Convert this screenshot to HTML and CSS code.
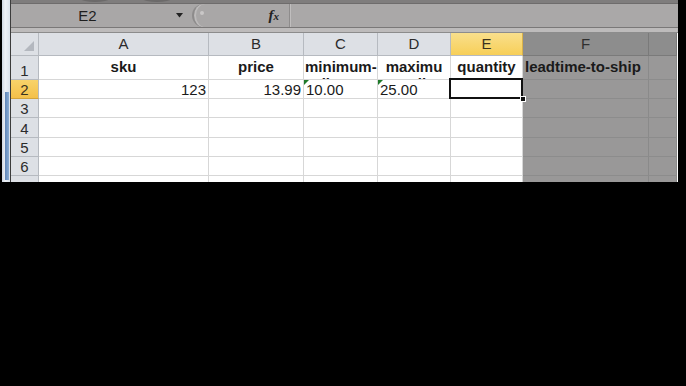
FILE: index.html
```html
<!DOCTYPE html>
<html>
<head>
<meta charset="utf-8">
<link rel="stylesheet" href="styles.css">
</head>
<body>
<div class="screen">
  <div class="edge"></div>
  <div class="winstrip"><div class="winstrip-blue"></div></div>
  <div class="app">
    <div class="ribbon-bottom">
      <span class="rb-bump rb-bump1"></span>
      <span class="rb-bump rb-bump2"></span>
    </div>
    <div class="formula-bar">
      <div class="name-box">
        <span class="name-text">E2</span>
        <svg class="dd" width="7" height="5" viewBox="0 0 7 5"><path d="M0 0H7L3.5 4.5Z" fill="#222"/></svg>
      </div>
      <div class="grip"><span class="grip-dot"></span></div>
      <div class="fx-area"><span class="fx">f<span class="fx-x">x</span></span></div>
      <div class="formula-input"></div>
    </div>
    <div class="sep"></div>
    <div class="grid">
      <div class="hdr corner"><svg width="10" height="10" viewBox="0 0 10 10"><path d="M10 0V10H0Z" fill="#b4b8bf"/></svg></div>
      <div class="hdr col">A</div>
      <div class="hdr col">B</div>
      <div class="hdr col">C</div>
      <div class="hdr col">D</div>
      <div class="hdr col col-active">E</div>
      <div class="hdr col shade-hdr">F</div>
      <div class="hdr col shade-hdr"></div>

      <div class="hdr rowh">1</div>
      <div class="cell bold center">sku</div>
      <div class="cell bold center">price</div>
      <div class="cell bold wrap">minimum-seller-allowed-price</div>
      <div class="cell bold wrap breakall">maximum-seller-allowed-price</div>
      <div class="cell bold center">quantity</div>
      <div class="cell bold shade">leadtime-to-ship</div>
      <div class="cell shade"></div>

      <div class="hdr rowh row-active">2</div>
      <div class="cell right">123</div>
      <div class="cell right">13.99</div>
      <div class="cell flag">10.00</div>
      <div class="cell flag">25.00</div>
      <div class="cell selected"><span class="sel-box"></span><span class="fill-handle"></span></div>
      <div class="cell shade"></div>
      <div class="cell shade"></div>

      <div class="hdr rowh">3</div>
      <div class="cell"></div><div class="cell"></div><div class="cell"></div><div class="cell"></div><div class="cell"></div><div class="cell shade"></div><div class="cell shade"></div>

      <div class="hdr rowh">4</div>
      <div class="cell"></div><div class="cell"></div><div class="cell"></div><div class="cell"></div><div class="cell"></div><div class="cell shade"></div><div class="cell shade"></div>

      <div class="hdr rowh">5</div>
      <div class="cell"></div><div class="cell"></div><div class="cell"></div><div class="cell"></div><div class="cell"></div><div class="cell shade"></div><div class="cell shade"></div>

      <div class="hdr rowh">6</div>
      <div class="cell"></div><div class="cell"></div><div class="cell"></div><div class="cell"></div><div class="cell"></div><div class="cell shade"></div><div class="cell shade"></div>

      <div class="hdr rowh"></div>
      <div class="cell"></div><div class="cell"></div><div class="cell"></div><div class="cell"></div><div class="cell"></div><div class="cell shade"></div><div class="cell shade"></div>
    </div>
  </div>
</div>
</body>
</html>
```

FILE: styles.css
```css
html, body {
  margin: 0;
  padding: 0;
  background: #000;
}
body {
  width: 686px;
  height: 386px;
  overflow: hidden;
  font-family: "Liberation Sans", Arial, sans-serif;
}
.screen {
  display: flex;
  height: 182px;
}
.edge {
  width: 2px;
  background: #000;
}
.winstrip {
  width: 8px;
  background: linear-gradient(to right, #cfd8e3, #eef2f7 40%, #dbe3ec);
  display: flex;
  flex-direction: column;
  justify-content: flex-end;
  padding-bottom: 2px;
  box-sizing: border-box;
}
.winstrip-blue {
  height: 88px;
  margin: 0 1px 0 3px;
  background: linear-gradient(to right, #5f86b8, #8aaed6);
}
.app {
  width: 668px;
  border-left: 1px solid #3c3c3c;
  box-sizing: border-box;
  display: flex;
  flex-direction: column;
  overflow: hidden;
  background: #a8a6a6;
}
.ribbon-bottom {
  height: 4px;
  background: #7f7d7d;
  position: relative;
  border-bottom: 1px solid #6e6c6c;
  box-sizing: border-box;
}
.rb-bump {
  position: absolute;
  top: -4px;
  width: 28px;
  height: 6px;
  border-radius: 50%;
  background: #6c6a6a;
}
.rb-bump1 { left: 70px; }
.rb-bump2 { left: 132px; }
.formula-bar {
  height: 23px;
  display: flex;
  align-items: stretch;
  background: #a9a7a7;
}
.name-box {
  width: 178px;
  display: flex;
  align-items: center;
  position: relative;
}
.name-text {
  flex: 1;
  text-align: center;
  font-size: 15px;
  color: #1e1e1e;
  padding-right: 12px;
}
.dd {
  margin-right: 6px;
}
.grip {
  width: 20px;
  margin: 0 0 0 3px;
  border-left: 2px solid #8d8b8b;
  border-radius: 12px 0 0 12px;
  position: relative;
  box-shadow: inset 2px 0 0 #bdbbbb;
}
.grip-dot {
  position: absolute;
  left: 6px;
  top: 7px;
  width: 4px;
  height: 4px;
  border-radius: 50%;
  background: #c9c7c7;
}
.fx-area {
  width: 76px;
  display: flex;
  align-items: center;
  justify-content: flex-end;
  border-right: 1px solid #8e8c8c;
  box-shadow: 1px 0 0 #c0bebe;
  padding-right: 10px;
  box-sizing: border-box;
}
.fx {
  font-family: "Liberation Serif", "Times New Roman", serif;
  font-style: italic;
  font-weight: bold;
  font-size: 15px;
  color: #222;
}
.fx-x {
  font-size: 11px;
}
.formula-input {
  flex: 1;
  background: #aaa8a8;
  margin-left: 2px;
}
.sep {
  height: 6px;
  box-sizing: border-box;
  border-top: 1px solid #7a7878;
  border-bottom: 1px solid #8c8c8c;
  background: #bdbbbb;
}
.grid {
  display: grid;
  grid-template-columns: 28px 170px 95px 74px 73px 72px 126px 28px;
  grid-template-rows: 23px 24px 19px 19px 20px 19px 19px 20px;
  background: #fff;
  flex: 1;
  overflow: hidden;
}
.hdr {
  background: #dde0e5;
  border-right: 1px solid #b6bac0;
  border-bottom: 1px solid #b6bac0;
  box-sizing: border-box;
  color: #2b2b2b;
  font-size: 15px;
  display: flex;
  align-items: center;
  justify-content: center;
}
.corner {
  align-items: flex-end;
  justify-content: flex-end;
  padding: 0 4px 4px 0;
}
.col {
  padding-bottom: 1px;
}
.col-active {
  background: linear-gradient(#f9df8c, #f7cf58);
  border-right-color: #d9b24a;
  color: #3a3220;
}
.shade-hdr {
  background: #8d8d8d;
  border-right-color: #7a7a7a;
  border-bottom-color: #7a7a7a;
  color: #2f2f2f;
}
.rowh {
  align-items: flex-end;
  padding-bottom: 0;
  line-height: 17px;
}
.row-active {
  background: linear-gradient(#f8d36a, #f4c04a);
  border-bottom-color: #d3a43c;
  color: #3a3220;
}
.cell {
  border-right: 1px solid #d7d7d7;
  border-bottom: 1px solid #d7d7d7;
  box-sizing: border-box;
  font-size: 15px;
  color: #1a1a1a;
  padding: 0 2px;
  display: flex;
  align-items: flex-end;
  white-space: nowrap;
  overflow: hidden;
  position: relative;
  line-height: 17px;
}
.bold {
  font-weight: bold;
  align-items: flex-start;
  padding-top: 2px;
}
.center { justify-content: center; }
.right { justify-content: flex-end; }
.wrap {
  white-space: normal;
  overflow: hidden;
  display: block;
  padding-left: 1px;
  padding-right: 0;
}
.breakall {
  word-break: break-all;
  text-align: center;
  padding-left: 4px;
  padding-right: 4px;
}
.shade {
  background: #999898;
  border-right-color: #8a8a8a;
  border-bottom-color: #8c8c8c;
}
.flag::before {
  content: "";
  position: absolute;
  left: 0;
  top: 0;
  border-top: 5px solid #1f7a2a;
  border-right: 5px solid transparent;
}
.selected {
  overflow: visible;
  z-index: 2;
}
.sel-box {
  position: absolute;
  left: -2px;
  top: -2px;
  right: -1px;
  bottom: -1px;
  border: 2px solid #111;
  box-shadow: inset 0 0 0 1px #fff;
}
.fill-handle {
  position: absolute;
  right: -4px;
  bottom: -4px;
  width: 6px;
  height: 6px;
  background: #111;
  border: 1px solid #fff;
  box-sizing: border-box;
}
```
